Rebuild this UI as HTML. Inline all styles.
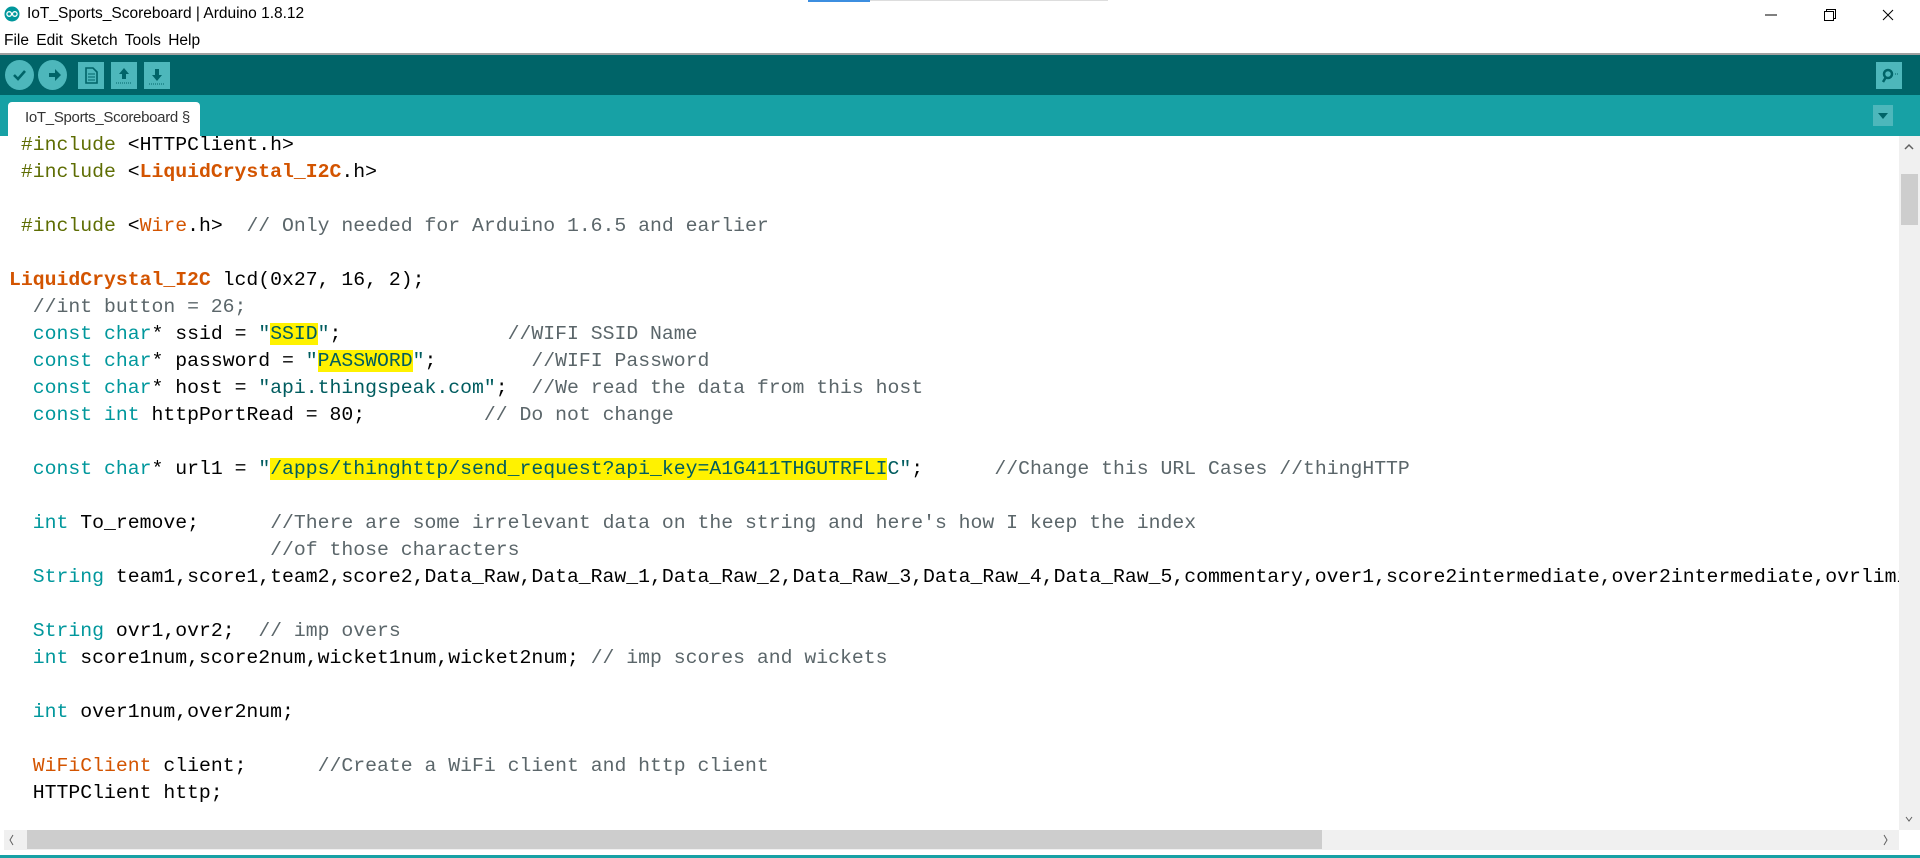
<!DOCTYPE html>
<html><head><meta charset="utf-8">
<style>
*{margin:0;padding:0;box-sizing:border-box}
body{width:1920px;height:858px;overflow:hidden;background:#fff;position:relative;font-family:"Liberation Sans",sans-serif}
.abs{position:absolute}
#title{left:27px;top:5px;font-size:15.5px;color:#000}
#menu{left:4px;top:32px;font-size:15.5px;color:#000;word-spacing:3px}
#sep{left:0;top:53px;width:1920px;height:2px;background:#a0a0a0}
#tool{left:0;top:55px;width:1920px;height:40px;background:#006468}
#tabs{left:0;top:95px;width:1920px;height:41px;background:#17a1a5}
.circ{width:29px;height:30px;border-radius:50%;background:#4db7bb;top:60px}
.box{width:26px;height:27px;background:#4db7bb;top:62px}
#tab{left:8px;top:102px;width:192px;height:34px;background:#fff;border-radius:4px 4px 0 0}
#tabt{left:25px;top:109px;font-size:15px;color:#333;letter-spacing:-0.3px}
pre{position:absolute;left:9px;top:132px;font-family:"Liberation Mono",monospace;font-size:19.8px;line-height:27px;color:#000;white-space:pre;width:1890px;overflow:hidden}
.k{color:#00979c}.c{color:#5b666a}.s{color:#005c5f}.o{color:#d35400}.ob{color:#d35400;font-weight:bold}.p{color:#5e6d03}
.h{background:#fff200}
#vs{left:1899px;top:136px;width:21px;height:694px;background:#f0f0f0}
#vt{left:1901px;top:174px;width:17px;height:51px;background:#cdcdcd}
#hs{left:4px;top:830px;width:1895px;height:20px;background:#f0f0f0}
#ht{left:27px;top:830px;width:1295px;height:19px;background:#cdcdcd}
#bot{left:0;top:855px;width:1920px;height:3px;background:#17a1a5}
</style></head><body>
<div class="abs" style="left:808px;top:0;width:62px;height:2px;background:#3c8ee0"></div>
<div class="abs" style="left:870px;top:0;width:238px;height:1px;background:#ddd"></div>
<svg class="abs" style="left:4px;top:6px" width="16" height="16" viewBox="0 0 16 16"><circle cx="8" cy="8" r="7.5" fill="#00979c"/><circle cx="5.2" cy="8" r="2.3" fill="none" stroke="#fff" stroke-width="1.3"/><circle cx="10.8" cy="8" r="2.3" fill="none" stroke="#fff" stroke-width="1.3"/></svg>
<div id="title" class="abs">IoT_Sports_Scoreboard | Arduino 1.8.12</div>
<svg class="abs" style="left:1760px;top:5px" width="150" height="20"><line x1="5" y1="10" x2="17" y2="10" stroke="#000"/><rect x="64.5" y="6.5" width="9" height="9" fill="none" stroke="#000"/><path d="M66.5 6.5V4.5H75.5V13.5H73.5" fill="none" stroke="#000"/><path d="M123 5L133 15M133 5L123 15" stroke="#000"/></svg>
<div id="menu" class="abs">File Edit Sketch Tools Help</div>
<div id="sep" class="abs"></div>
<div id="tool" class="abs"></div>
<div class="abs circ" style="left:5px"></div>
<div class="abs circ" style="left:38px"></div>
<svg class="abs" style="left:5px;top:60px" width="70" height="30"><path d="M9 15l4 4 7-8" fill="none" stroke="#006468" stroke-width="2.6"/><path d="M44 13h6v-4l6 6-6 6v-4h-6z" fill="#006468"/></svg>
<div class="abs box" style="left:78px"></div>
<div class="abs box" style="left:111px"></div>
<div class="abs box" style="left:144px"></div>
<svg class="abs" style="left:78px;top:62px" width="95" height="27"><path d="M8 6h7l4 4v11H8z" fill="none" stroke="#006468" stroke-width="1.6"/><path d="M10 12h7M10 15h7M10 18h7" stroke="#006468"/><path d="M46 6l-5 6h3v5h4v-5h3z" fill="#006468"/><path d="M38 21h16" stroke="#006468" stroke-dasharray="1 1"/><path d="M79 19l-5-6h3V7h4v6h3z" fill="#006468"/><path d="M71 22h16" stroke="#006468" stroke-dasharray="1 1"/></svg>
<div class="abs" style="left:1876px;top:62px;width:26px;height:27px;background:#4db7bb"></div>
<svg class="abs" style="left:1876px;top:62px" width="26" height="27"><circle cx="12" cy="12" r="4" fill="none" stroke="#006468" stroke-width="2.5"/><path d="M10 15l-3 5" stroke="#006468" stroke-width="2.5"/><path d="M19 12h4" stroke="#006468" stroke-dasharray="1 1"/></svg>
<div id="tabs" class="abs"></div>
<div id="tab" class="abs"></div>
<div id="tabt" class="abs">IoT_Sports_Scoreboard §</div>
<div class="abs" style="left:1873px;top:105px;width:20px;height:21px;background:#4db7bb"></div>
<svg class="abs" style="left:1873px;top:105px" width="20" height="21"><path d="M5 8h10l-5 6z" fill="#006468"/></svg>
<pre> <span class="p">#include</span> &lt;HTTPClient.h&gt;
 <span class="p">#include</span> &lt;<span class="ob">LiquidCrystal_I2C</span>.h&gt;

 <span class="p">#include</span> &lt;<span class="o">Wire</span>.h&gt;  <span class="c">// Only needed for Arduino 1.6.5 and earlier</span>

<span class="ob">LiquidCrystal_I2C</span> lcd(0x27, 16, 2);
  <span class="c">//int button = 26;</span>
  <span class="k">const</span> <span class="k">char</span>* ssid = <span class="s">"<span class="h">SSID</span>"</span>;              <span class="c">//WIFI SSID Name</span>
  <span class="k">const</span> <span class="k">char</span>* password = <span class="s">"<span class="h">PASSWORD</span>"</span>;        <span class="c">//WIFI Password</span>
  <span class="k">const</span> <span class="k">char</span>* host = <span class="s">"api.thingspeak.com"</span>;  <span class="c">//We read the data from this host</span>
  <span class="k">const</span> <span class="k">int</span> httpPortRead = 80;          <span class="c">// Do not change</span>

  <span class="k">const</span> <span class="k">char</span>* url1 = <span class="s">"<span class="h">/apps/thinghttp/send_request?api_key=A1G411THGUTRFLI</span>C"</span>;      <span class="c">//Change this URL Cases //thingHTTP</span>

  <span class="k">int</span> To_remove;      <span class="c">//There are some irrelevant data on the string and here's how I keep the index</span>
                      <span class="c">//of those characters</span>
  <span class="k">String</span> team1,score1,team2,score2,Data_Raw,Data_Raw_1,Data_Raw_2,Data_Raw_3,Data_Raw_4,Data_Raw_5,commentary,over1,score2intermediate,over2intermediate,ovrlimit;

  <span class="k">String</span> ovr1,ovr2;  <span class="c">// imp overs</span>
  <span class="k">int</span> score1num,score2num,wicket1num,wicket2num; <span class="c">// imp scores and wickets</span>

  <span class="k">int</span> over1num,over2num;

  <span class="o">WiFiClient</span> client;      <span class="c">//Create a WiFi client and http client</span>
  HTTPClient http;
</pre>
<div id="vs" class="abs"></div>
<div id="vt" class="abs"></div>
<svg class="abs" style="left:1899px;top:138px" width="21" height="692"><path d="M6 11l4-4 4 4" fill="none" stroke="#606060" stroke-width="1.5"/><path d="M7 679l3 4 3-4" fill="none" stroke="#606060"/></svg>
<div id="hs" class="abs"></div>
<div id="ht" class="abs"></div>
<svg class="abs" style="left:4px;top:830px" width="1895" height="20"><path d="M9 5l-3 5 3 5" fill="none" stroke="#606060"/><path d="M1880 5l3 5-3 5" fill="none" stroke="#606060"/></svg>
<div id="bot" class="abs"></div>
</body></html>
